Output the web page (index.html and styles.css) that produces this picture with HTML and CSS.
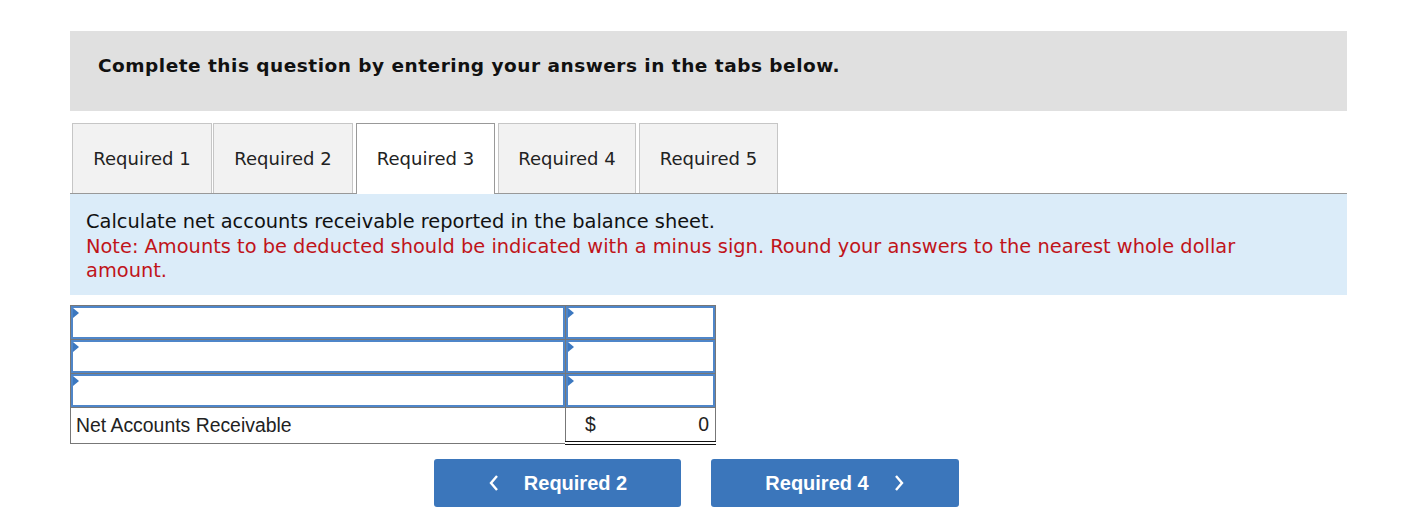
FILE: index.html
```
<!DOCTYPE html>
<html>
<head>
<meta charset="utf-8">
<link rel="stylesheet" href="styles.css">
</head>
<body>
<div class="page">
  <div class="header">Complete this question by entering your answers in the tabs below.</div>
  <div class="tabs">
    <div class="tab t1">Required 1</div>
    <div class="tab t2">Required 2</div>
    <div class="tab t3 active">Required 3</div>
    <div class="tab t4">Required 4</div>
    <div class="tab t5">Required 5</div>
  </div>
  <div class="instructions">
    <div>Calculate net accounts receivable reported in the balance sheet.</div>
    <div class="note">Note: Amounts to be deducted should be indicated with a minus sign. Round your answers to the nearest whole dollar amount.</div>
  </div>
  <table class="grid">
    <tr><td class="c1"><div class="inp"><span class="tri"></span></div></td><td class="c2"><div class="inp"><span class="tri"></span></div></td></tr>
    <tr><td class="c1"><div class="inp"><span class="tri"></span></div></td><td class="c2"><div class="inp"><span class="tri"></span></div></td></tr>
    <tr><td class="c1"><div class="inp"><span class="tri"></span></div></td><td class="c2"><div class="inp"><span class="tri"></span></div></td></tr>
    <tr class="total"><td class="c1 label">Net Accounts Receivable</td><td class="c2 amount"><span class="dollar">$</span><span class="val">0</span></td></tr>
  </table>
  <div class="nav">
    <button class="btn prev"><svg width="12" height="18" viewBox="0 0 12 18"><path d="M9 2 L3 9 L9 16" fill="none" stroke="#fff" stroke-width="2.4"/></svg><span>Required 2</span></button>
    <button class="btn next"><span>Required 4</span><svg width="12" height="18" viewBox="0 0 12 18"><path d="M3 2 L9 9 L3 16" fill="none" stroke="#fff" stroke-width="2.4"/></svg></button>
  </div>
</div>
</body>
</html>
```
FILE: styles.css
```
html, body { margin: 0; padding: 0; background: #fff; }
.page { padding: 31px 68px 0 70px; font-family: Verdana, "DejaVu Sans", sans-serif; }
.header {
  background: #e0e0e0;
  height: 80px;
  box-sizing: border-box;
  padding: 24px 0 0 28px;
  font-weight: bold;
  font-size: 18.5px;
  letter-spacing: 0.5px;
  color: #111;
}
.tabs {
  display: flex;
  align-items: flex-start;
  margin-top: 12px;
  padding-left: 2px;
  border-bottom: 1px solid #999;
  height: 70px;
}
.tab {
  width: 140px;
  height: 70px;
  box-sizing: border-box;
  background: #f2f2f2;
  border: 1px solid #c6c6c6;
  border-bottom: none;
  display: flex;
  align-items: center;
  justify-content: center;
  font-size: 18px;
  color: #222;
  flex-shrink: 0;
}
.t1 { margin-right: 1px; }
.t2 { margin-right: 3px; }
.t3 { width: 139px; margin-right: 3px; }
.t4 { width: 138px; margin-right: 3px; }
.t5 { width: 139px; }
.tab.active {
  background: #fff;
  border-color: #999;
  height: 71px;
  padding-bottom: 1px;
}
.instructions {
  background: #dbecf9;
  padding: 16px 60px 0 16px;
  font-size: 19.4px;
  line-height: 24.5px;
  color: #111;
  height: 101px;
  box-sizing: border-box;
}
.note { color: #c0141a; }
.grid {
  margin-top: 10px;
  border-collapse: collapse;
  font-family: Arial, "Liberation Sans", sans-serif;
}
.grid td { border: 1px solid #777; padding: 0; }
.c1 { width: 494px; }
.c2 { width: 149px; }
.inp {
  height: 29px;
  border: 2px solid #4f86c9;
  position: relative;
  background: #fff;
}
.tri {
  position: absolute;
  left: 0;
  top: 0;
  width: 0; height: 0;
  border-top: 5px solid transparent;
  border-bottom: 5px solid transparent;
  border-left: 6px solid #3c78c0;
}
.total td { height: 33px; font-size: 19.4px; color: #222; }
.total .label { width: 489px; padding-left: 5px; }
.total .amount { width: 124px; border-bottom: 4px double #111; padding: 0 6px 0 19px; }
.amount .dollar { float: left; }
.amount .val { float: right; }
.nav {
  display: flex;
  gap: 30px;
  margin-top: 14px;
  padding-left: 364px;
}
.btn {
  width: 247px;
  height: 48px;
  background: #3b76bb;
  border: none;
  border-radius: 3px;
  color: #fff;
  font-family: Arial, "Liberation Sans", sans-serif;
  font-weight: bold;
  font-size: 20px;
  display: flex;
  align-items: center;
  justify-content: center;
  gap: 24px;
  padding: 0;
}
.next { width: 248px; }
```
